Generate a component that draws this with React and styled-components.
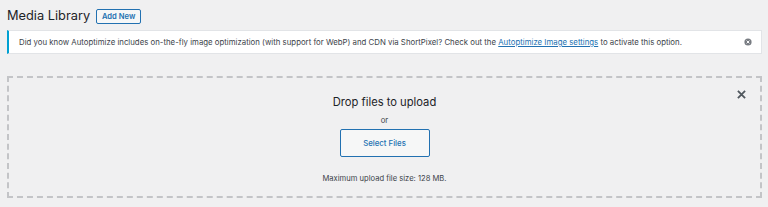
import React from "react";
import styled, { createGlobalStyle } from "styled-components";

const Global = createGlobalStyle`
  html, body {
    margin: 0;
    padding: 0;
    background: #f0f0f1;
  }
  body {
    font-family: Inter, "Noto Sans", sans-serif;
    color: #3c434a;
  }
`;

const Wrap = styled.div`
  padding: 0 6px 0 7px;
`;

const Header = styled.div`
  display: flex;
  align-items: center;
  gap: 6px;
  height: 30px;
  padding-top: 2px;
  box-sizing: border-box;
`;

const Title = styled.h1`
  margin: 0;
  font-size: 12.8px;
  font-weight: 400;
  color: #1d2327;
  line-height: 1;
`;

const OutlineButton = styled.button`
  font-family: inherit;
  background: #f6f7f7;
  border: 1px solid #2271b1;
  border-radius: 2px;
  color: #2271b1;
  cursor: pointer;
  font-size: ${(p) => (p.$big ? "7.8px" : "7.6px")};
  font-weight: ${(p) => (p.$big ? 500 : 600)};
  padding: 0;
  width: ${(p) => p.$w}px;
  height: ${(p) => p.$h}px;
  display: flex;
  align-items: center;
  justify-content: center;
`;

const Notice = styled.div`
  display: flex;
  align-items: center;
  height: 24px;
  background: #fff;
  border: 1px solid #e2e4e7;
  border-left: 2px solid #00a0d2;
  box-sizing: border-box;
  padding: 0 9px 0 10px;
  font-size: 7.82px;
  color: #3c434a;
`;

const NoticeText = styled.p`
  margin: 0;
  flex: 1;
  white-space: nowrap;
`;

const Link = styled.a`
  color: #2271b1;
  text-decoration: underline;
`;

const Dismiss = styled.span`
  width: 8px;
  height: 8px;
  display: flex;
  align-items: center;
  justify-content: center;
`;

const Dropzone = styled.div`
  position: relative;
  margin-top: 22px;
  height: 122px;
  box-sizing: border-box;
  border: 2px dashed #c3c4c7;
  display: flex;
  flex-direction: column;
  align-items: center;
`;

const CloseX = styled.button`
  position: absolute;
  top: 11px;
  right: 14px;
  background: none;
  border: 0;
  padding: 0;
  width: 10px;
  height: 10px;
  display: flex;
  align-items: center;
  justify-content: center;
`;

const DropTitle = styled.h2`
  margin: 17px 0 0;
  font-size: 11.2px;
  font-weight: 400;
  color: #1d2327;
  line-height: 14px;
`;

const Or = styled.p`
  margin: 7px 0 3px;
  font-size: 7.7px;
  line-height: 10px;
`;

const MaxSize = styled.p`
  margin: 17px 0 0;
  font-size: 7.6px;
  line-height: 10px;
  color: #3c434a;
`;

export default function App() {
  return (
    <Wrap>
      <Global />
      <Header>
        <Title>Media Library</Title>
        <OutlineButton $w={45} $h={15}>Add New</OutlineButton>
      </Header>
      <Notice>
        <NoticeText>
          Did you know Autoptimize includes on-the-fly image optimization (with support for WebP) and CDN via
          ShortPixel? Check out the <Link href="#">Autoptimize Image settings</Link> to activate this option.
        </NoticeText>
        <Dismiss>
          <svg width="8" height="8" viewBox="0 0 20 20">
            <circle cx="10" cy="10" r="9" fill="#787c82" />
            <path d="M6.5 6.5l7 7M13.5 6.5l-7 7" stroke="#fff" strokeWidth="2.4" />
          </svg>
        </Dismiss>
      </Notice>
      <Dropzone>
        <CloseX aria-label="Close uploader">
          <svg width="9" height="9" viewBox="0 0 10 10">
            <path d="M1 1l8 8M9 1l-8 8" stroke="#50575e" strokeWidth="2" />
          </svg>
        </CloseX>
        <DropTitle>Drop files to upload</DropTitle>
        <Or>or</Or>
        <OutlineButton $big $w={90} $h={28}>Select Files</OutlineButton>
        <MaxSize>Maximum upload file size: 128 MB.</MaxSize>
      </Dropzone>
    </Wrap>
  );
}
